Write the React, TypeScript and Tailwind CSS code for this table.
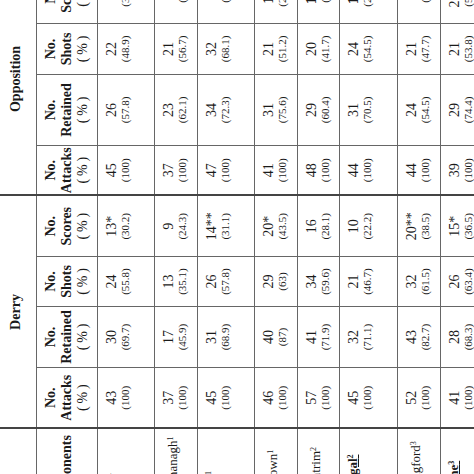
type Cell = [string, string];

type Row = {
  name: string;
  sup: string;
  bold?: boolean;
  tall?: boolean;
  h: number;
  derry: Cell[];
  opp: Cell[];
  oppBold?: boolean;
};

const rows: Row[] = [
  {
    name: "Sligo",
    sup: "1",
    tall: true,
    h: 57,
    derry: [["43", "100"], ["30", "69.7"], ["24", "55.8"], ["13*", "30.2"]],
    opp: [["45", "100"], ["26", "57.8"], ["22", "48.9"], ["15", "33.3"]],
  },
  {
    name: "Fermanagh",
    sup: "1",
    h: 43,
    derry: [["37", "100"], ["17", "45.9"], ["13", "35.1"], ["9", "24.3"]],
    opp: [["37", "100"], ["23", "62.1"], ["21", "56.7"], ["10", "27"]],
  },
  {
    name: "Laois",
    sup: "1",
    tall: true,
    h: 57,
    derry: [["45", "100"], ["31", "68.9"], ["26", "57.8"], ["14**", "31.1"]],
    opp: [["47", "100"], ["34", "72.3"], ["32", "68.1"], ["16", "34"]],
  },
  {
    name: "Down",
    sup: "1",
    h: 43,
    derry: [["46", "100"], ["40", "87"], ["29", "63"], ["20*", "43.5"]],
    opp: [["41", "100"], ["31", "75.6"], ["21", "51.2"], ["11*", "26.8"]],
    oppBold: true,
  },
  {
    name: "Antrim",
    sup: "2",
    h: 42,
    derry: [["57", "100"], ["41", "71.9"], ["34", "59.6"], ["16", "28.1"]],
    opp: [["48", "100"], ["29", "60.4"], ["20", "41.7"], ["12*", "25"]],
    oppBold: true,
  },
  {
    name: "Donegal",
    sup: "2",
    bold: true,
    tall: true,
    h: 58,
    derry: [["45", "100"], ["32", "71.1"], ["21", "46.7"], ["10", "22.2"]],
    opp: [["44", "100"], ["31", "70.5"], ["24", "54.5"], ["12*", "27.3"]],
    oppBold: true,
  },
  {
    name: "Longford",
    sup: "3",
    h: 43,
    derry: [["52", "100"], ["43", "82.7"], ["32", "61.5"], ["20**", "38.5"]],
    opp: [["44", "100"], ["24", "54.5"], ["21", "47.7"], ["11", "25"]],
  },
  {
    name: "Tyrone",
    sup: "3",
    bold: true,
    tall: true,
    h: 57,
    derry: [["41", "100"], ["28", "68.3"], ["26", "63.4"], ["15*", "36.5"]],
    opp: [["39", "100"], ["29", "74.4"], ["21", "53.8"], ["20**", "51.3"]],
  },
];

const subHeads = ["Attacks", "Retained", "Shots", "Scores"];

function Head({ label, thick }: { label: string; thick?: boolean }) {
  return (
    <th
      className={`border border-[#666666] p-0 text-center align-middle text-[14px] leading-[16px] font-bold ${
        thick ? "border-l-2 border-l-[#444444]" : ""
      }`}
    >
      <div>No.</div>
      <div>{label}</div>
      <div className="font-normal">(&thinsp;%&thinsp;)</div>
    </th>
  );
}

function Data({ cell, thick, bold }: { cell: Cell; thick?: boolean; bold?: boolean }) {
  return (
    <td
      className={`border border-[#666666] px-0 pt-[7px] pb-0 text-center align-top ${
        thick ? "border-l-2 border-l-[#444444]" : ""
      }`}
    >
      <div className={`text-[14px] leading-[14px] ${bold ? "font-bold" : ""}`}>{cell[0]}</div>
      <div className="text-[11px] leading-[12px]">({cell[1]})</div>
    </td>
  );
}

export default function App() {
  return (
    <div className="w-[474px] h-[474px] overflow-hidden bg-white">
      <table className="table-fixed border-collapse w-[543px] origin-top-left -rotate-90 translate-x-[-4px] translate-y-[507px] font-['Liberation_Serif',serif] text-[#1a1a1a]">
        <colgroup>
          <col className="w-[78px]" />
          <col className="w-[61px]" />
          <col className="w-[61px]" />
          <col className="w-[50px]" />
          <col className="w-[61px]" />
          <col className="w-[50px]" />
          <col className="w-[71px]" />
          <col className="w-[51px]" />
          <col className="w-[60px]" />
        </colgroup>
        <thead>
          <tr className="h-[40px]">
            <th className="border-b border-[#666666] p-0" />
            <th
              colSpan={4}
              className="border-b border-l-2 border-b-[#666666] border-l-[#444444] p-0 text-center align-middle text-[14px] font-bold"
            >
              Derry
            </th>
            <th
              colSpan={4}
              className="border-b border-l-2 border-b-[#666666] border-l-[#444444] p-0 text-center align-middle text-[14px] font-bold"
            >
              Opposition
            </th>
          </tr>
          <tr className="h-[61px]">
            <th className="border border-[#666666] p-0 text-center align-middle text-[14px] font-bold">
              Opponents
            </th>
            {subHeads.map((s, i) => (
              <Head key={"d" + s} label={s} thick={i === 0} />
            ))}
            {subHeads.map((s, i) => (
              <Head key={"o" + s} label={s} thick={i === 0} />
            ))}
          </tr>
        </thead>
        <tbody>
          {rows.map((r) => (
            <tr key={r.name} style={{ height: r.h }}>
              <td
                className={`border border-[#666666] px-0 pb-0 align-top text-[13px] leading-[16px] ${
                  r.tall ? "text-left pl-[2px] pt-[5px]" : "text-center pt-[10px]"
                } ${r.bold ? "font-bold underline" : ""}`}
              >
                {r.name}
                <sup className="text-[8px]">{r.sup}</sup>
              </td>
              {r.derry.map((c, i) => (
                <Data key={"d" + i} cell={c} thick={i === 0} />
              ))}
              {r.opp.map((c, i) => (
                <Data key={"o" + i} cell={c} thick={i === 0} bold={r.oppBold && i === 3} />
              ))}
            </tr>
          ))}
        </tbody>
      </table>
    </div>
  );
}
